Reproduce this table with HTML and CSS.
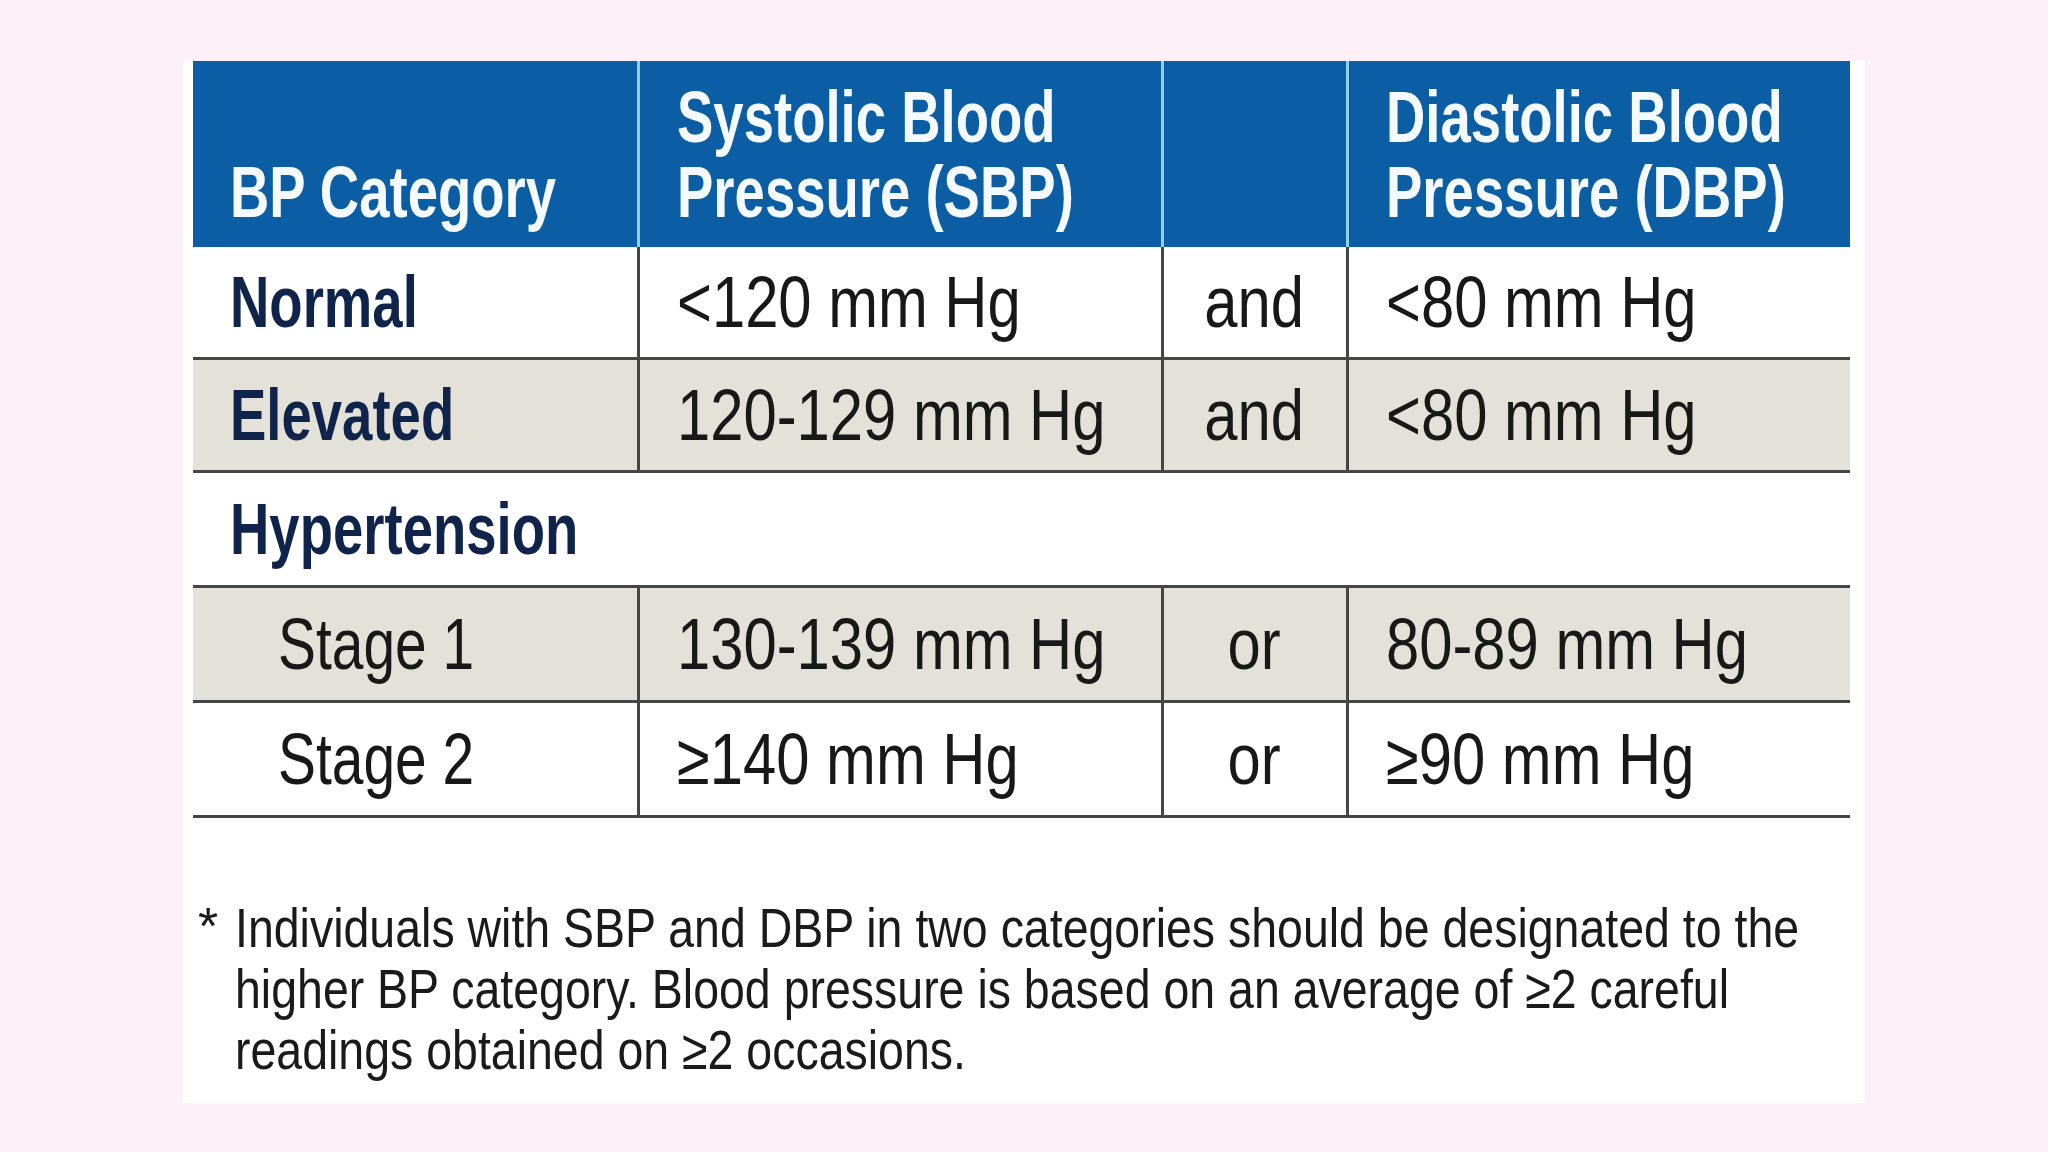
FILE: index.html
```html
<!DOCTYPE html>
<html lang="en">
<head>
<meta charset="utf-8">
<title>BP Categories</title>
<link rel="stylesheet" href="styles.css">
</head>
<body>
<div class="panel">
  <table class="bp-table">
    <colgroup>
      <col class="col-cat">
      <col class="col-sbp">
      <col class="col-op">
      <col class="col-dbp">
    </colgroup>
    <thead>
      <tr>
        <th><span class="t">BP Category</span></th>
        <th><span class="t">Systolic Blood<br>Pressure (SBP)</span></th>
        <th></th>
        <th><span class="t">Diastolic Blood<br>Pressure (DBP)</span></th>
      </tr>
    </thead>
    <tbody>
      <tr class="row-1">
        <td class="cat"><span class="t">Normal</span></td>
        <td><span class="t">&lt;120 mm Hg</span></td>
        <td class="op"><span class="t">and</span></td>
        <td><span class="t">&lt;80 mm Hg</span></td>
      </tr>
      <tr class="row-2 shaded">
        <td class="cat"><span class="t">Elevated</span></td>
        <td><span class="t">120-129 mm Hg</span></td>
        <td class="op"><span class="t">and</span></td>
        <td><span class="t">&lt;80 mm Hg</span></td>
      </tr>
      <tr class="row-3">
        <td class="cat" colspan="4"><span class="t">Hypertension</span></td>
      </tr>
      <tr class="row-4 shaded">
        <td class="stage"><span class="t">Stage 1</span></td>
        <td><span class="t">130-139 mm Hg</span></td>
        <td class="op"><span class="t">or</span></td>
        <td><span class="t">80-89 mm Hg</span></td>
      </tr>
      <tr class="row-5">
        <td class="stage"><span class="t">Stage 2</span></td>
        <td><span class="t">&ge;140 mm Hg</span></td>
        <td class="op"><span class="t">or</span></td>
        <td><span class="t">&ge;90 mm Hg</span></td>
      </tr>
    </tbody>
  </table>
  <div class="footnote">
    <span class="star">*</span>
    <p class="note-text">Individuals with SBP and DBP in two categories should be designated to the<br>higher BP category. Blood pressure is based on an average of &ge;2 careful<br>readings obtained on &ge;2 occasions.</p>
  </div>
</div>
</body>
</html>
```

FILE: styles.css
```css
html, body {
  margin: 0;
  padding: 0;
}

body {
  background: #fdf0f6;
  font-family: "Liberation Sans", Arial, sans-serif;
  width: 2048px;
  height: 1152px;
  overflow: hidden;
}

.panel {
  width: 1682px;
  height: 1042px;
  margin: 61px auto 0;
  background: #ffffff;
  padding: 0 15px 0 10px;
  box-sizing: border-box;
  overflow: hidden;
}

.bp-table {
  width: 1657px;
  table-layout: fixed;
  border-collapse: collapse;
  border-spacing: 0;
}

.col-cat { width: 445px; }
.col-sbp { width: 524px; }
.col-op { width: 185px; }
.col-dbp { width: 503px; }

/* condensed look: the typeface is squeezed horizontally */
.t {
  display: inline-block;
  transform: scaleX(0.83);
  transform-origin: 0 50%;
  white-space: nowrap;
}

.bp-table th {
  background: #0b5ea3;
  color: #f4faff;
  font-weight: 700;
  font-size: 72px;
  line-height: 75px;
  text-align: left;
  vertical-align: bottom;
  white-space: nowrap;
  height: 186px;
  padding: 0 0 17px 37px;
  box-sizing: border-box;
}

.bp-table th .t,
.bp-table td.cat .t {
  transform: scaleX(0.757);
}

.bp-table td.stage .t {
  transform: scaleX(0.79);
}

.bp-table th + th {
  border-left: 3px solid #8fd0ef;
}

.bp-table td {
  font-size: 72px;
  line-height: 80px;
  color: #181818;
  padding: 0 0 0 37px;
  vertical-align: middle;
  border-bottom: 3px solid #454545;
  white-space: nowrap;
}

.bp-table td + td {
  border-left: 3px solid #454545;
}

.bp-table .row-1 td { height: 110px; }
.bp-table .row-2 td { height: 110px; }
.bp-table .row-3 td,
.bp-table .row-4 td,
.bp-table .row-5 td { height: 112px; }

.shaded td {
  background: #e4e2d8;
}

.bp-table td.cat {
  font-weight: 700;
  color: #10244b;
}

.bp-table td.stage {
  padding-left: 85px;
}

.bp-table td.op {
  text-align: center;
  padding-left: 0;
}

.bp-table td.op .t {
  transform-origin: 50% 50%;
}

.footnote {
  display: flex;
  align-items: flex-start;
  margin-top: 79px;
  color: #1a1a1a;
}

.star {
  width: 42px;
  padding-left: 5px;
  box-sizing: border-box;
  font-size: 52px;
  line-height: 58px;
  flex: none;
}

.note-text {
  margin: 0;
  font-size: 56px;
  line-height: 61px;
  white-space: nowrap;
  transform: scaleX(0.83);
  transform-origin: 0 0;
}
```
